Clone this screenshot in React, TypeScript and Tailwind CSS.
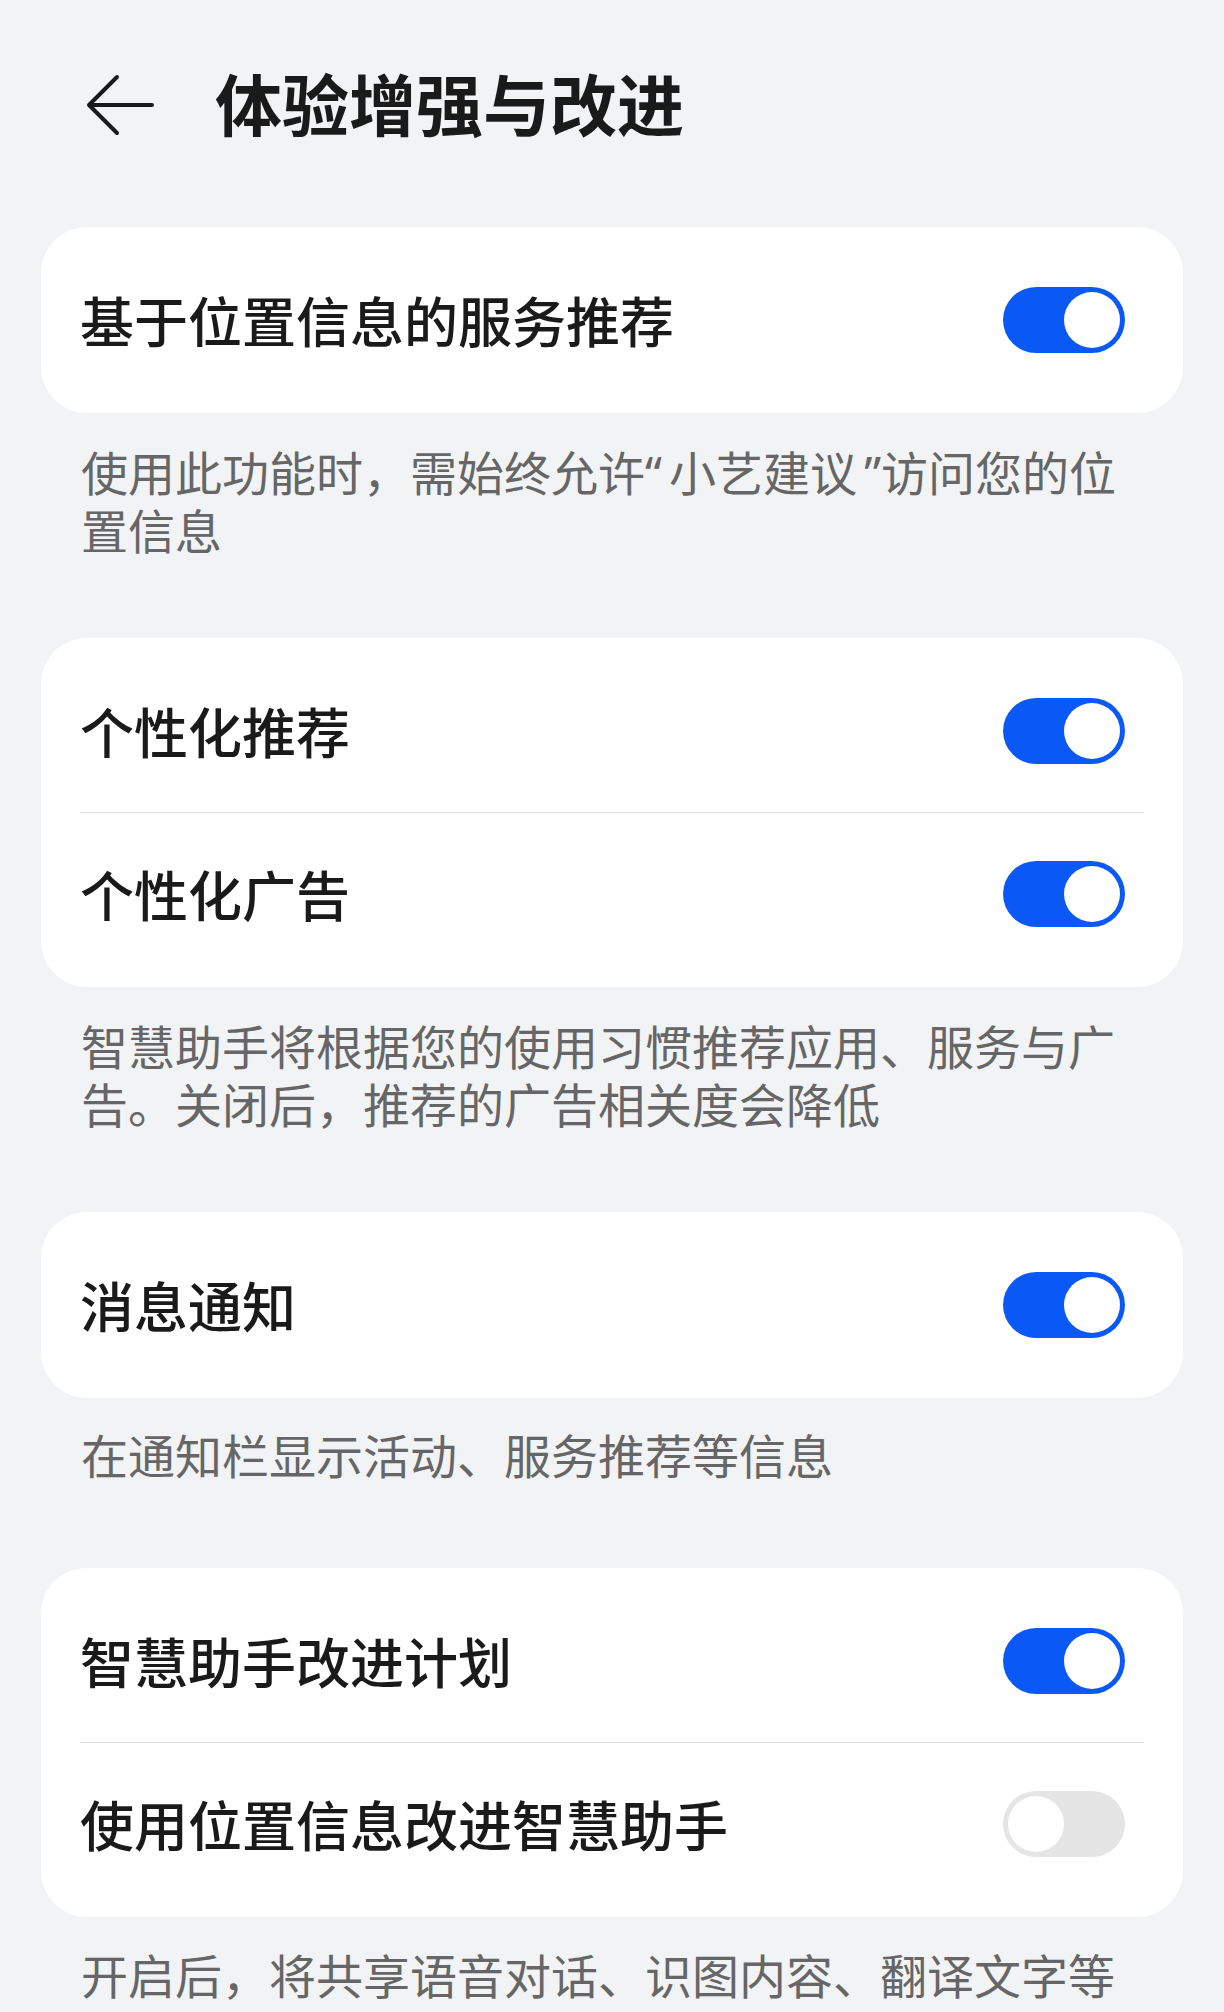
import type { ReactNode } from 'react';

// narrow Latin-style quotes, as the system font draws them
const Q = ({ children, right }: { children: ReactNode; right?: boolean }) => (
  <span
    className={`inline-block w-[24px] font-['Noto_Sans',sans-serif] leading-none ${
      right ? 'text-right' : 'text-left'
    }`}
  >
    {children}
  </span>
);

const SECTIONS: { rows: { label: string; on: boolean }[]; desc: ReactNode[]; pad: string }[] = [
  {
    rows: [{ label: '基于位置信息的服务推荐', on: true }],
    desc: [
      <>
        使用此功能时，需始终允许<Q>“</Q>小艺建议<Q right>”</Q>访问您的位
      </>,
      '置信息',
    ],
    pad: 'pt-[29px] pb-[80px]',
  },
  {
    rows: [
      { label: '个性化推荐', on: true },
      { label: '个性化广告', on: true },
    ],
    desc: ['智慧助手将根据您的使用习惯推荐应用、服务与广', '告。关闭后，推荐的广告相关度会降低'],
    pad: 'pt-[29px] pb-[80px]',
  },
  {
    rows: [{ label: '消息通知', on: true }],
    desc: ['在通知栏显示活动、服务推荐等信息'],
    pad: 'pt-[27px] pb-[85px]',
  },
  {
    rows: [
      { label: '智慧助手改进计划', on: true },
      { label: '使用位置信息改进智慧助手', on: false },
    ],
    desc: ['开启后，将共享语音对话、识图内容、翻译文字等', '数据上传，用于改进相关技术，为您提供更好的体验'],
    pad: 'pt-[28px] pb-[40px]',
  },
];

function Toggle({ on }: { on: boolean }) {
  return (
    <div
      className={`flex h-[66px] w-[122px] shrink-0 items-center rounded-full p-[5px] ${
        on ? 'justify-end bg-[#0a59f7]' : 'justify-start bg-[#e5e5e5]'
      }`}
    >
      <span className="block h-[56px] w-[56px] rounded-full bg-white" />
    </div>
  );
}

export default function App() {
  return (
    <div className="min-h-screen w-full bg-[#f1f3f5] font-['Noto_Sans_CJK_SC','Noto_Sans',sans-serif] text-[#1a1a1a]">
      <header className="flex h-[210px] items-center pl-[86px]">
        <svg width="68" height="62" viewBox="0 0 68 62" fill="none" aria-label="返回">
          <path
            d="M66 31H3M31 3L3 31L31 59"
            stroke="#1a1a1a"
            strokeWidth="4"
            strokeLinecap="round"
            strokeLinejoin="round"
          />
        </svg>
        <h1 className="ml-[61px] pb-[8px] text-[67px] font-bold leading-none tracking-normal">
          体验增强与改进
        </h1>
      </header>

      <main className="mx-[41px] pt-[17px]">
        {SECTIONS.map((s, i) => (
          <section key={i}>
            <div className="rounded-[46px] bg-white py-3">
              {s.rows.map((r, j) => (
                <div key={r.label}>
                  {j > 0 && <div className="mx-[39px] h-px bg-[#dedede]" />}
                  <div className="flex h-[162px] items-center justify-between pl-[39px] pr-[58px]">
                    <span className="text-[54px] font-medium leading-none">{r.label}</span>
                    <Toggle on={r.on} />
                  </div>
                </div>
              ))}
            </div>
            <div
              className={`pl-[40px] text-[47px] leading-[58px] whitespace-nowrap text-[#666666] ${s.pad}`}
            >
              {s.desc.map((line, k) => (
                <p key={k} className="h-[58px]">
                  {line}
                </p>
              ))}
            </div>
          </section>
        ))}
      </main>
    </div>
  );
}
